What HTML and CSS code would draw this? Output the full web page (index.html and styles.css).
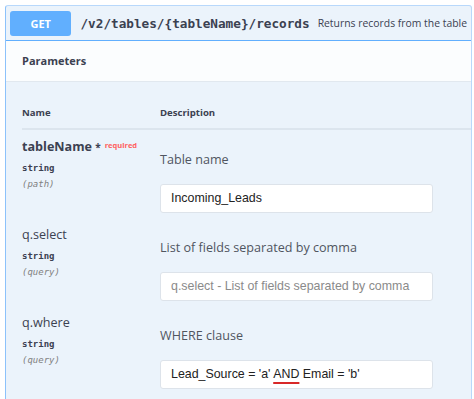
FILE: index.html
```html
<!DOCTYPE html>
<html lang="en">
<head>
    <meta charset="UTF-8">
    <title>GET /v2/tables/{tableName}/records</title>
    <link rel="stylesheet" href="styles.css">
</head>
<body>
    <div class="opblock">
        <div class="summary">
            <span class="method">GET</span>
            <span class="path">/v2/tables/{tableName}/records</span>
            <span class="desc">Returns records from the table</span>
        </div>
        <div class="section-head">Parameters</div>
        <div class="params">
            <div class="params-head">
                <div class="col-name">Name</div>
                <div>Description</div>
            </div>

            <div class="param">
                <div class="col-name">
                    <div class="pname bold">tableName <span class="star">*</span><sup class="required">required</sup></div>
                    <div class="ptype">string</div>
                    <div class="pin">(path)</div>
                </div>
                <div>
                    <div class="pdesc">Table name</div>
                    <div class="field">Incoming_Leads</div>
                </div>
            </div>

            <div class="param">
                <div class="col-name">
                    <div class="pname">q.select</div>
                    <div class="ptype">string</div>
                    <div class="pin">(query)</div>
                </div>
                <div>
                    <div class="pdesc">List of fields separated by comma</div>
                    <div class="field placeholder">q.select - List of fields separated by comma</div>
                </div>
            </div>

            <div class="param">
                <div class="col-name">
                    <div class="pname">q.where</div>
                    <div class="ptype">string</div>
                    <div class="pin">(query)</div>
                </div>
                <div>
                    <div class="pdesc">WHERE clause</div>
                    <div class="field">Lead_Source = 'a' <span class="misspelt">AND</span> Email = 'b'</div>
                </div>
            </div>
        </div>
    </div>
</body>
</html>
```

FILE: styles.css
```css
body {
    margin: 0;
    padding: 5px 2px 4px 5px;
    background: #fff;
    font-family: "Open Sans", sans-serif;
    color: #3b4151;
}
.opblock {
    background: #ebf3fb;
    border: 1px solid #b8d8fb;
    border-left-color: #8cc2fb;
    border-radius: 3px;
    overflow: hidden;
}
.summary {
    display: flex;
    align-items: center;
    height: 34px;
    padding: 0 4px;
    border-bottom: 1px solid #61affe;
}
.method {
    width: 63px;
    height: 25px;
    line-height: 25px;
    text-align: center;
    background: #61affe;
    color: #fff;
    border-radius: 3px;
    font-size: 11px;
    font-weight: 700;
}
.path {
    margin-left: 9px;
    font-family: "DejaVu Sans Mono", monospace;
    font-size: 12.7px;
    font-weight: 700;
    color: #3b4151;
    white-space: nowrap;
}
.desc {
    margin-left: 8px;
    font-size: 10.4px;
    white-space: nowrap;
    color: #3b4151;
}
.section-head {
    height: 40px;
    line-height: 40px;
    padding-left: 16px;
    background: rgba(255,255,255,.8);
    border-bottom: 1px solid #e1e8ef;
    font-size: 11px;
    font-weight: 700;
}
.params {
    padding-left: 16px;
}
.params-head {
    display: flex;
    padding-top: 24px;
    padding-bottom: 8px;
    line-height: 14px;
    font-size: 9.6px;
    font-weight: 700;
    border-bottom: 2px solid #dce5ee;
}
.col-name {
    width: 138px;
    flex-shrink: 0;
}
.params-head + .param {
    margin-top: 8px;
}
.param {
    display: flex;
    padding-bottom: 13px;
}
.pname {
    line-height: 18px;
    font-size: 12.6px;
}
.pname.bold {
    font-weight: 700;
}
.star {
    font-size: 10px;
    color: #3b4151;
}
.required {
    margin-left: 4px;
    font-size: 7.5px;
    color: #ff6060;
    position: relative;
    top: -2px;
    vertical-align: top;
}
.ptype {
    margin-top: 3px;
    line-height: 18px;
    font-family: "DejaVu Sans Mono", monospace;
    font-size: 9px;
    font-weight: 700;
}
.pin {
    line-height: 14px;
    font-family: "DejaVu Sans Mono", monospace;
    font-size: 9px;
    font-style: italic;
    color: #808080;
}
.pdesc {
    margin-top: 12px;
    line-height: 20px;
    font-size: 12.6px;
    color: #50555f;
}
.field {
    margin-top: 14px;
    width: 251px;
    height: 27px;
    line-height: 27px;
    padding: 0 10px;
    background: #fff;
    border: 1px solid #dde3ea;
    border-radius: 3px;
    font-family: "Liberation Sans", Arial, sans-serif;
    font-size: 12.4px;
    color: #222;
    white-space: nowrap;
    overflow: hidden;
}
.placeholder {
    color: #8a8a8a;
}
.misspelt {
    text-decoration: underline solid #d82828;
    text-decoration-thickness: 1.5px;
    text-underline-offset: 4px;
}
```
